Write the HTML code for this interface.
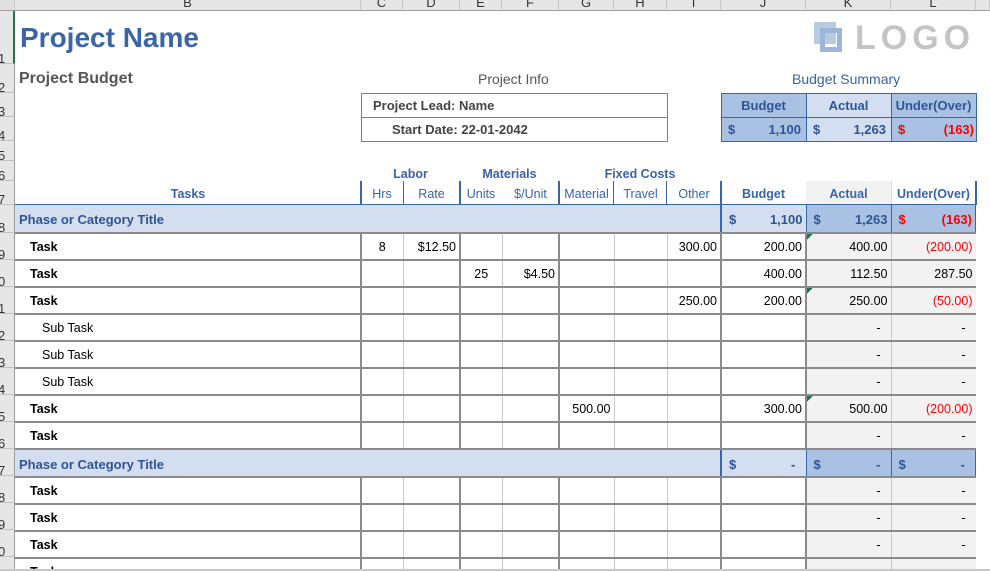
<!DOCTYPE html>
<html><head><meta charset="utf-8"><style>
*{margin:0;padding:0;box-sizing:border-box}
html,body{width:990px;height:571px;overflow:hidden}
body{background:#fff;font-family:"Liberation Sans",Arial,sans-serif;font-size:12.5px;color:#000;position:relative}
.a{position:absolute;white-space:nowrap}
.colh{position:absolute;top:0;height:11px;background:#e6e6e6;border-right:1px solid #c8c8c8;border-bottom:1px solid #9b9b9b;overflow:hidden;text-align:center;font-size:13px;line-height:6px;color:#333}
.rowh{position:absolute;left:0;width:15px;background:#e6e6e6;border-bottom:1px solid #c0c0c0;border-right:1px solid #9b9b9b;overflow:hidden;font-size:13px;color:#333}
.rowh span{position:absolute;left:-2px;bottom:-3px}
table{position:absolute;left:15px;top:205px;border-collapse:collapse;table-layout:fixed}
td{height:27px;padding:0 3px;border-bottom:2px solid #8a8a8a;white-space:nowrap;overflow:hidden;text-align:right;font-size:12.5px}
td.b{text-align:left;font-weight:bold;padding-left:15px}
td.s{text-align:left;padding-left:27px}
.tg{border-right:2px solid #8a8a8a}
.tl{border-right:1px solid #c8c8c8}
.gr{background:#f2f2f2}
.ph td{background:#d3dff0;color:#2f5496;font-weight:bold;height:28px;font-size:13px;padding-top:2px}
.ph td.k{background:#a9c1e3}
.red{color:#f00}
.hd{color:#3a63a8;font-weight:bold;font-size:12.5px}
</style></head><body>
<div class="colh" style="left:0;width:15px;background:#e0e0e0"></div>
<div class="colh" style="left:15px;width:346px">B</div>
<div class="colh" style="left:361px;width:42px">C</div>
<div class="colh" style="left:403px;width:57px">D</div>
<div class="colh" style="left:460px;width:42px">E</div>
<div class="colh" style="left:502px;width:57px">F</div>
<div class="colh" style="left:559px;width:55px">G</div>
<div class="colh" style="left:614px;width:53px">H</div>
<div class="colh" style="left:667px;width:54px">I</div>
<div class="colh" style="left:721px;width:85px">J</div>
<div class="colh" style="left:806px;width:85px">K</div>
<div class="colh" style="left:891px;width:85px">L</div>
<div class="colh" style="left:976px;width:14px"></div>
<div class="rowh" style="top:11px;height:53px;border-right:2px solid #217346"><span>1</span></div>
<div class="rowh" style="top:64px;height:29px"><span>2</span></div>
<div class="rowh" style="top:93px;height:24px"><span>3</span></div>
<div class="rowh" style="top:117px;height:24px"><span>4</span></div>
<div class="rowh" style="top:141px;height:20px"><span>5</span></div>
<div class="rowh" style="top:161px;height:20px"><span>6</span></div>
<div class="rowh" style="top:181px;height:24px"><span>7</span></div>
<div class="rowh" style="top:205px;height:28px"><span>8</span></div>
<div class="rowh" style="top:233px;height:27px"><span>9</span></div>
<div class="rowh" style="top:260px;height:27px"><span>0</span></div>
<div class="rowh" style="top:287px;height:27px"><span>1</span></div>
<div class="rowh" style="top:314px;height:27px"><span>2</span></div>
<div class="rowh" style="top:341px;height:27px"><span>3</span></div>
<div class="rowh" style="top:368px;height:27px"><span>4</span></div>
<div class="rowh" style="top:395px;height:27px"><span>5</span></div>
<div class="rowh" style="top:422px;height:27px"><span>6</span></div>
<div class="rowh" style="top:449px;height:27px"><span>7</span></div>
<div class="rowh" style="top:476px;height:27px"><span>8</span></div>
<div class="rowh" style="top:503px;height:27px"><span>9</span></div>
<div class="rowh" style="top:530px;height:27px"><span>0</span></div>
<div class="rowh" style="top:557px;height:27px"><span>1</span></div>

<div class="a" style="left:20px;top:22px;font-size:28px;font-weight:bold;color:#3a66a8">Project Name</div>
<div class="a" style="left:814px;top:22px;width:22px;height:22px;background:#b8cbe2"></div>
<div class="a" style="left:820px;top:28px;width:22px;height:24px;border:5px solid #9bb6d8"></div>
<div class="a" style="left:855px;top:19px;font-size:34px;font-weight:bold;color:#c4c4c4;letter-spacing:5px">LOGO</div>

<div class="a" style="left:19px;top:70px;font-size:16px;font-weight:bold;color:#555">Project Budget</div>
<div class="a" style="left:478px;top:71px;font-size:14px;color:#555">Project Info</div>
<div class="a" style="left:792px;top:71px;font-size:14px;color:#3a63a8">Budget Summary</div>

<div class="a" style="left:361px;top:93px;width:307px;height:49px;border:1px solid #808080"></div>
<div class="a" style="left:361px;top:117px;width:307px;height:1px;background:#808080"></div>
<div class="a" style="left:373px;top:98px;font-weight:bold;font-size:13px;color:#444">Project Lead: Name</div>
<div class="a" style="left:392px;top:122px;font-weight:bold;font-size:13px;color:#444">Start Date: 22-01-2042</div>

<div class="a" style="left:721px;top:93px;width:85px;height:24px;background:#a9c1e3"></div>
<div class="a" style="left:806px;top:93px;width:85px;height:24px;background:#d3dff0"></div>
<div class="a" style="left:891px;top:93px;width:85px;height:24px;background:#a9c1e3"></div>
<div class="a" style="left:721px;top:117px;width:85px;height:25px;background:#a9c1e3"></div>
<div class="a" style="left:806px;top:117px;width:85px;height:25px;background:#d3dff0"></div>
<div class="a" style="left:891px;top:117px;width:85px;height:25px;background:#a9c1e3"></div>
<div class="a" style="left:721px;top:93px;width:256px;height:49px;border:1px solid #3a66a8"></div>
<div class="a" style="left:721px;top:117px;width:256px;height:1px;background:#3a66a8"></div>
<div class="a" style="left:806px;top:93px;width:1px;height:49px;background:#3a66a8"></div>
<div class="a" style="left:891px;top:93px;width:1px;height:49px;background:#3a66a8"></div>
<div class="a" style="left:721px;top:98px;width:85px;text-align:center;font-weight:bold;font-size:13px;color:#2f5496">Budget</div>
<div class="a" style="left:806px;top:98px;width:85px;text-align:center;font-weight:bold;font-size:13px;color:#2f5496">Actual</div>
<div class="a" style="left:891px;top:98px;width:85px;text-align:center;font-weight:bold;font-size:13px;color:#2f5496">Under(Over)</div>
<div class="a" style="left:728px;top:122px;font-weight:bold;font-size:13px;color:#2f5496">$</div>
<div class="a" style="left:721px;top:122px;width:80px;text-align:right;font-weight:bold;font-size:13px;color:#2f5496">1,100</div>
<div class="a" style="left:813px;top:122px;font-weight:bold;font-size:13px;color:#2f5496">$</div>
<div class="a" style="left:806px;top:122px;width:80px;text-align:right;font-weight:bold;font-size:13px;color:#2f5496">1,263</div>
<div class="a" style="left:898px;top:122px;font-weight:bold;font-size:13px;color:#f00">$</div>
<div class="a" style="left:891px;top:122px;width:83px;text-align:right;font-weight:bold;font-size:13px;color:#f00">(163)</div>

<div class="a hd" style="left:361px;top:167px;width:99px;text-align:center">Labor</div>
<div class="a hd" style="left:460px;top:167px;width:99px;text-align:center">Materials</div>
<div class="a hd" style="left:559px;top:167px;width:162px;text-align:center">Fixed Costs</div>
<div class="a" style="left:806px;top:181px;width:85px;height:24px;background:#f2f2f2"></div>
<div class="a hd" style="left:15px;top:187px;width:346px;text-align:center">Tasks</div>
<div class="a" style="left:361px;top:187px;width:42px;text-align:center;color:#3a63a8">Hrs</div>
<div class="a" style="left:403px;top:187px;width:57px;text-align:center;color:#3a63a8">Rate</div>
<div class="a" style="left:460px;top:187px;width:42px;text-align:center;color:#3a63a8">Units</div>
<div class="a" style="left:502px;top:187px;width:57px;text-align:center;color:#3a63a8">$/Unit</div>
<div class="a" style="left:559px;top:187px;width:55px;text-align:center;color:#3a63a8">Material</div>
<div class="a" style="left:614px;top:187px;width:53px;text-align:center;color:#3a63a8">Travel</div>
<div class="a" style="left:667px;top:187px;width:54px;text-align:center;color:#3a63a8">Other</div>
<div class="a hd" style="left:721px;top:187px;width:85px;text-align:center">Budget</div>
<div class="a hd" style="left:806px;top:187px;width:85px;text-align:center">Actual</div>
<div class="a hd" style="left:891px;top:187px;width:85px;text-align:center">Under(Over)</div>
<div class="a" style="left:360px;top:181px;width:2px;height:24px;background:#3a66a8"></div>
<div class="a" style="left:403px;top:181px;width:1px;height:24px;background:#3a66a8"></div>
<div class="a" style="left:459px;top:181px;width:2px;height:24px;background:#3a66a8"></div>
<div class="a" style="left:558px;top:181px;width:2px;height:24px;background:#3a66a8"></div>
<div class="a" style="left:613px;top:181px;width:1px;height:24px;background:#3a66a8"></div>
<div class="a" style="left:666px;top:181px;width:1px;height:24px;background:#3a66a8"></div>
<div class="a" style="left:720px;top:181px;width:2px;height:24px;background:#3a66a8"></div>
<div class="a" style="left:891px;top:181px;width:1px;height:24px;background:#dcdcdc"></div>
<div class="a" style="left:975px;top:181px;width:2px;height:24px;background:#3a66a8"></div>
<div class="a" style="left:15px;top:204px;width:962px;height:2px;background:#3a66a8"></div>

<table>
<colgroup><col style="width:346px"><col style="width:42px"><col style="width:57px"><col style="width:42px"><col style="width:57px"><col style="width:55px"><col style="width:53px"><col style="width:54px"><col style="width:85px"><col style="width:85px"><col style="width:85px"></colgroup>
<tr class="ph"><td style="text-align:left;padding-left:4px" colspan="8">Phase or Category Title</td><td style="border-left:2px solid #3a66a8;border-right:1px solid #3a66a8"><span style="float:left;padding-left:4px">$</span>1,100</td><td class="k" style="border-right:1px solid #3a66a8"><span style="float:left;padding-left:4px">$</span>1,263</td><td class="k" style="color:#f00;border-right:2px solid #3a66a8"><span style="float:left;padding-left:4px">$</span>(163)</td></tr>
<tr><td class="b tg">Task</td><td class="tl" style="text-align:center">8</td><td class="tg">$12.50</td><td class="tl"></td><td class="tg"></td><td class="tl"></td><td class="tl"></td><td class="tg">300.00</td><td class="tg">200.00</td><td class="gr tl" style="background:linear-gradient(135deg,#217346 4px,#f2f2f2 4px)">400.00</td><td class="gr red tl">(200.00)</td></tr>
<tr><td class="b tg">Task</td><td class="tl"></td><td class="tg"></td><td class="tl" style="text-align:center">25</td><td class="tg">$4.50</td><td class="tl"></td><td class="tl"></td><td class="tg"></td><td class="tg">400.00</td><td class="gr tl">112.50</td><td class="gr tl">287.50</td></tr>
<tr><td class="b tg">Task</td><td class="tl"></td><td class="tg"></td><td class="tl"></td><td class="tg"></td><td class="tl"></td><td class="tl"></td><td class="tg">250.00</td><td class="tg">200.00</td><td class="gr tl" style="background:linear-gradient(135deg,#217346 4px,#f2f2f2 4px)">250.00</td><td class="gr red tl">(50.00)</td></tr>
<tr><td class="s tg">Sub Task</td><td class="tl"></td><td class="tg"></td><td class="tl"></td><td class="tg"></td><td class="tl"></td><td class="tl"></td><td class="tg"></td><td class="tg"></td><td class="gr tl">-&nbsp;&nbsp;</td><td class="gr tl">-&nbsp;&nbsp;</td></tr>
<tr><td class="s tg">Sub Task</td><td class="tl"></td><td class="tg"></td><td class="tl"></td><td class="tg"></td><td class="tl"></td><td class="tl"></td><td class="tg"></td><td class="tg"></td><td class="gr tl">-&nbsp;&nbsp;</td><td class="gr tl">-&nbsp;&nbsp;</td></tr>
<tr><td class="s tg">Sub Task</td><td class="tl"></td><td class="tg"></td><td class="tl"></td><td class="tg"></td><td class="tl"></td><td class="tl"></td><td class="tg"></td><td class="tg"></td><td class="gr tl">-&nbsp;&nbsp;</td><td class="gr tl">-&nbsp;&nbsp;</td></tr>
<tr><td class="b tg">Task</td><td class="tl"></td><td class="tg"></td><td class="tl"></td><td class="tg"></td><td class="tl">500.00</td><td class="tl"></td><td class="tg"></td><td class="tg">300.00</td><td class="gr tl" style="background:linear-gradient(135deg,#217346 4px,#f2f2f2 4px)">500.00</td><td class="gr red tl">(200.00)</td></tr>
<tr><td class="b tg">Task</td><td class="tl"></td><td class="tg"></td><td class="tl"></td><td class="tg"></td><td class="tl"></td><td class="tl"></td><td class="tg"></td><td class="tg"></td><td class="gr tl">-&nbsp;&nbsp;</td><td class="gr tl">-&nbsp;&nbsp;</td></tr>
<tr class="ph"><td style="text-align:left;padding-left:4px;height:27px" colspan="8">Phase or Category Title</td><td style="border-left:2px solid #3a66a8;border-right:1px solid #3a66a8;height:27px"><span style="float:left;padding-left:4px">$</span>-&nbsp;&nbsp;</td><td class="k" style="border-right:1px solid #3a66a8"><span style="float:left;padding-left:4px">$</span>-&nbsp;&nbsp;</td><td class="k" style="border-right:2px solid #3a66a8"><span style="float:left;padding-left:4px">$</span>-&nbsp;&nbsp;</td></tr>
<tr><td class="b tg">Task</td><td class="tl"></td><td class="tg"></td><td class="tl"></td><td class="tg"></td><td class="tl"></td><td class="tl"></td><td class="tg"></td><td class="tg"></td><td class="gr tl">-&nbsp;&nbsp;</td><td class="gr tl">-&nbsp;&nbsp;</td></tr>
<tr><td class="b tg">Task</td><td class="tl"></td><td class="tg"></td><td class="tl"></td><td class="tg"></td><td class="tl"></td><td class="tl"></td><td class="tg"></td><td class="tg"></td><td class="gr tl">-&nbsp;&nbsp;</td><td class="gr tl">-&nbsp;&nbsp;</td></tr>
<tr><td class="b tg">Task</td><td class="tl"></td><td class="tg"></td><td class="tl"></td><td class="tg"></td><td class="tl"></td><td class="tl"></td><td class="tg"></td><td class="tg"></td><td class="gr tl">-&nbsp;&nbsp;</td><td class="gr tl">-&nbsp;&nbsp;</td></tr>
<tr><td class="b tg" style="vertical-align:top;padding-top:6px">Task</td><td class="tl"></td><td class="tg"></td><td class="tl"></td><td class="tg"></td><td class="tl"></td><td class="tl"></td><td class="tg"></td><td class="tg"></td><td class="gr tl"></td><td class="gr tl"></td></tr>
</table>
<div class="a" style="left:976px;top:205px;width:14px;height:366px;background:#fff"></div>
<div class="a" style="left:0;top:569px;width:990px;height:2px;background:#c8c8c8"></div>
</body></html>
